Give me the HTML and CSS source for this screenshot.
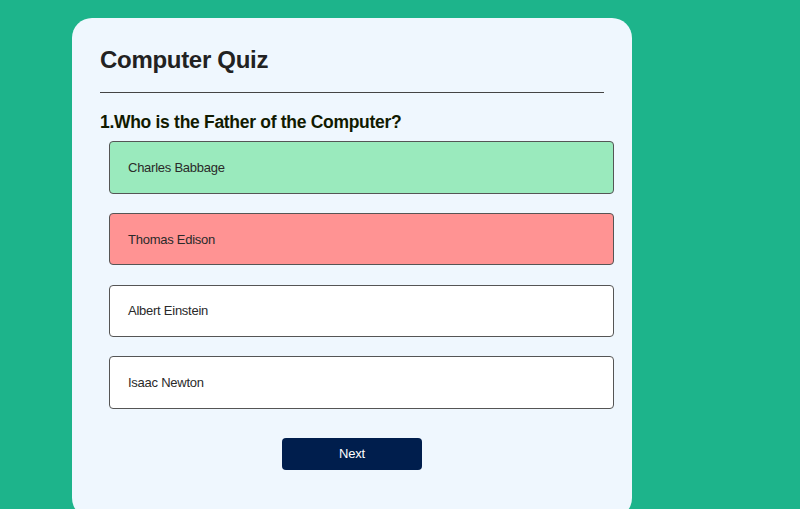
FILE: index.html
```html
<!DOCTYPE html>
<html lang="en">
<head>
<meta charset="utf-8">
<title>Computer Quiz</title>
<link rel="stylesheet" href="styles.css">
</head>
<body>
<div class="app">
  <h1 class="title">Computer Quiz</h1>
  <div class="quiz">
    <h2 class="question">1.Who is the Father of the Computer?</h2>
    <div class="answers">
      <button class="btn correct">Charles Babbage</button>
      <button class="btn incorrect">Thomas Edison</button>
      <button class="btn">Albert Einstein</button>
      <button class="btn">Isaac Newton</button>
    </div>
    <button class="next">Next</button>
  </div>
</div>
</body>
</html>
```

FILE: styles.css
```css
html, body {
  margin: 0;
  padding: 0;
  overflow: hidden;
}
body {
  background: #1db48b;
  font-family: "Liberation Sans", Arial, sans-serif;
  height: 509px;
}
.app {
  box-sizing: border-box;
  width: 560px;
  height: 500px;
  margin: 18px 0 0 72px;
  padding: 28px 28px;
  background: #eff7fe;
  border-radius: 20px;
}
.title {
  margin: 0;
  font-size: 24px;
  line-height: 28px;
  font-weight: bold;
  letter-spacing: -0.3px;
  color: #222;
  padding-bottom: 18px;
  border-bottom: 1px solid #444;
}
.question {
  margin: 18px 0 0;
  font-size: 17.5px;
  line-height: 22px;
  font-weight: bold;
  letter-spacing: -0.3px;
  color: #111a00;
}
.answers {
  display: flex;
  flex-direction: column;
  gap: 19.33px;
  margin: 8px 0 0 9px;
  width: 505px;
}
.btn {
  box-sizing: border-box;
  height: 52.5px;
  display: flex;
  align-items: center;
  padding: 0 0 0 18px;
  background: #fff;
  color: #2a2a2a;
  font-family: "Liberation Sans", Arial, sans-serif;
  font-size: 13px;
  letter-spacing: -0.25px;
  text-align: left;
  border: 1px solid #555;
  border-radius: 4px;
}
.btn.correct {
  background: #9aeabd;
}
.btn.incorrect {
  background: #ff9393;
}
.next {
  display: block;
  width: 140px;
  height: 32px;
  margin: 29px auto 0;
  background: #001e4d;
  color: #fff;
  font-family: "Liberation Sans", Arial, sans-serif;
  font-size: 13px;
  letter-spacing: -0.2px;
  border: none;
  border-radius: 4px;
}
```
